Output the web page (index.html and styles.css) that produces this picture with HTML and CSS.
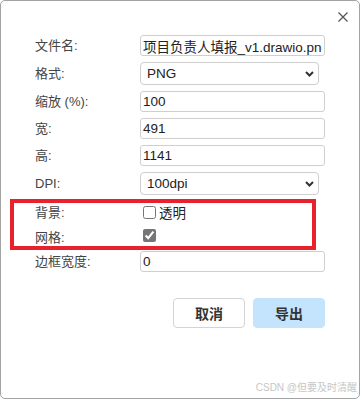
FILE: index.html
```html
<!DOCTYPE html>
<html lang="zh-CN">
<head>
  <meta charset="UTF-8">
  <title>导出</title>
  <link rel="stylesheet" href="styles.css">
</head>
<body>
  <div class="dialog">
    <div class="dialog-head">
      <span class="close" title="关闭">
        <svg width="10" height="10" viewBox="0 0 10 10"><path d="M0.5 0.5 L9.5 9.5 M9.5 0.5 L0.5 9.5" stroke="#555" stroke-width="1.3" fill="none"/></svg>
      </span>
    </div>

    <div class="form">
      <label class="field-label">文件名:</label>
      <input class="text-input" type="text" value="项目负责人填报_v1.drawio.png">

      <label class="field-label">格式:</label>
      <div class="select-wrap">
        <select class="select"><option>PNG</option></select>
        <svg class="chevron" width="9" height="6" viewBox="0 0 9 6"><path d="M1 1 L4.5 4.5 L8 1" stroke="#333" stroke-width="2" fill="none"/></svg>
      </div>

      <label class="field-label">缩放 (%):</label>
      <input class="text-input" type="text" value="100">

      <label class="field-label">宽:</label>
      <input class="text-input" type="text" value="491">

      <label class="field-label">高:</label>
      <input class="text-input" type="text" value="1141">

      <label class="field-label">DPI:</label>
      <div class="select-wrap">
        <select class="select"><option>100dpi</option></select>
        <svg class="chevron" width="9" height="6" viewBox="0 0 9 6"><path d="M1 1 L4.5 4.5 L8 1" stroke="#333" stroke-width="2" fill="none"/></svg>
      </div>

      <label class="field-label">背景:</label>
      <div class="check-cell">
        <input type="checkbox" id="transparent">
        <label for="transparent" class="check-text">透明</label>
      </div>

      <label class="field-label">网格:</label>
      <div class="check-cell check-top">
        <input type="checkbox" checked>
      </div>

      <label class="field-label">边框宽度:</label>
      <input class="text-input" type="text" value="0">
    </div>

    <div class="actions">
      <button class="btn">取消</button>
      <button class="btn btn-primary">导出</button>
    </div>

    <!-- 标注框 -->
    <div class="highlight"></div>
    <div class="watermark">CSDN @但要及时清醒</div>
  </div>
</body>
</html>
```
FILE: styles.css
```css
body {
  margin: 0;
  font-family: "Liberation Sans", "Noto Sans CJK SC", sans-serif;
  background: #fff;
}
.dialog {
  position: relative;
  box-sizing: border-box;
  width: 360px;
  height: 399px;
  border: 1px solid #a3a3a3;
  border-radius: 5px;
  padding: 11px 11px 0 34px;
  background: #fff;
}
.dialog-head {
  display: flex;
  justify-content: flex-end;
  height: 10px;
}
.close {
  display: flex;
  width: 10px;
  height: 10px;
}
.form {
  display: grid;
  grid-template-columns: 105px 185px;
  row-gap: 6px;
  align-items: center;
  margin-top: 13px;
}
.field-label {
  font-size: 13px;
  line-height: 15px;
  color: #444;
}
.text-input {
  box-sizing: border-box;
  width: 185px;
  height: 21px;
  margin: 0;
  padding: 0 2px;
  border: 1px solid #cfcfcf;
  border-radius: 3px;
  font-family: "Liberation Sans", "Noto Sans CJK SC", sans-serif;
  font-size: 13.5px;
  color: #222;
  outline: none;
}
.select-wrap {
  position: relative;
  width: 179px;
  height: 23px;
}
.select {
  appearance: none;
  box-sizing: border-box;
  width: 100%;
  height: 100%;
  margin: 0;
  padding: 0 0 0 6px;
  border: 1px solid #cfcfcf;
  border-radius: 4px;
  background: #fff;
  font-family: "Liberation Sans", "Noto Sans CJK SC", sans-serif;
  font-size: 13.5px;
  color: #222;
}
.chevron {
  position: absolute;
  right: 5px;
  top: 9px;
  pointer-events: none;
}
.check-cell {
  display: flex;
  align-items: center;
  height: 22px;
}
.check-cell.check-top {
  align-items: flex-start;
  height: 16px;
}
.check-cell input {
  width: 13px;
  height: 13px;
  margin: 0 0 0 3px;
  accent-color: #767676;
}
.check-text {
  margin-left: 3px;
  font-size: 13.5px;
  color: #222;
}
.actions {
  display: flex;
  justify-content: flex-end;
  gap: 8px;
  margin: 26px 23px 0 0;
}
.btn {
  box-sizing: border-box;
  width: 72px;
  height: 30px;
  border: 1px solid #d4d4d4;
  border-radius: 4px;
  background: #fff;
  font-family: "Liberation Sans", "Noto Sans CJK SC", sans-serif;
  font-size: 14px;
  font-weight: bold;
  color: #333;
}
.btn-primary {
  background: #c4e4fd;
  border-color: #c4e4fd;
}
.highlight {
  position: absolute;
  left: 9px;
  top: 198px;
  box-sizing: border-box;
  width: 306px;
  height: 51px;
  border: 4px solid #e8222c;
  pointer-events: none;
}
.watermark {
  position: absolute;
  right: 2px;
  bottom: 4px;
  font-size: 10px;
  color: #c6c6c6;
}
```
